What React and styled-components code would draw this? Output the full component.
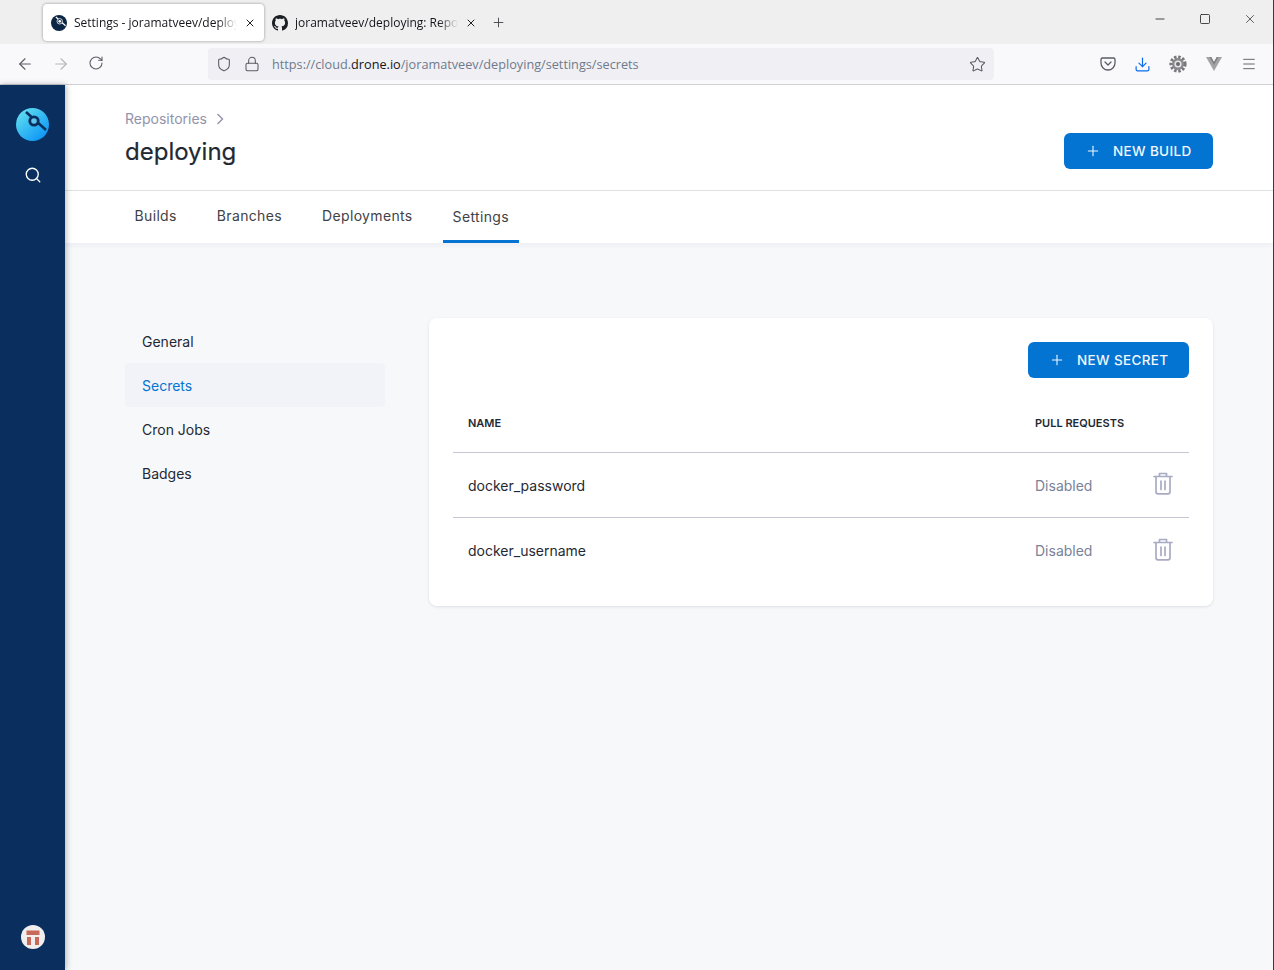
import React from "react";
import styled, { createGlobalStyle } from "styled-components";
import { ArrowLeft, ArrowRight, RotateCw, Shield, Lock, Star, Download, Menu, X, Plus, Search, Minus, Square } from "lucide-react";

const GlobalStyle = createGlobalStyle`
  html, body { margin: 0; padding: 0; background: #f7f8fa; }
  * { box-sizing: border-box; }
  body { font-family: Inter, "Liberation Sans", sans-serif; }
`;

const Window = styled.div`
  width: 1274px;
  height: 970px;
  display: flex;
  flex-direction: column;
  overflow: hidden;
  border-right: 1px solid #3a3a3a;
`;

const TabBar = styled.div`
  height: 44px;
  flex: none;
  background: #efeff0;
  display: flex;
  align-items: flex-start;
  padding: 4px 0 0 43px;
`;

const Tab = styled.div`
  width: ${(p) => p.$width}px;
  height: 37px;
  flex: none;
  display: flex;
  align-items: center;
  padding: 0 8px;
  gap: 7px;
  border-radius: 4px;
  background: ${(p) => (p.$active ? "#fff" : "transparent")};
  box-shadow: ${(p) => (p.$active ? "0 0 3px rgba(0,0,0,0.4)" : "none")};
  color: #15141a;
  font-family: "Open Sans", sans-serif;
  font-size: 12px;
`;

const TabTitle = styled.span`
  flex: 1;
  overflow: hidden;
  white-space: nowrap;
  -webkit-mask-image: linear-gradient(90deg, #000 88%, transparent);
  mask-image: linear-gradient(90deg, #000 88%, transparent);
`;

const NewTab = styled.div`
  margin: 11px 0 0 6px;
  color: #3d3d42;
  display: flex;
`;

const WindowButtons = styled.div`
  margin-left: auto;
  display: flex;
  align-items: center;
  gap: 32px;
  padding: 8px 16px 0 0;
  color: #111;
`;

const ToolBar = styled.div`
  height: 41px;
  flex: none;
  background: #f9f9fb;
  border-bottom: 1px solid #cfcfd4;
  display: flex;
  align-items: center;
  padding: 0 16px 0 16px;
  color: #5b5b66;
`;

const NavButtons = styled.div`
  display: flex;
  gap: 18px;
  width: 192px;
  flex: none;
`;

const UrlBar = styled.div`
  width: 786px;
  height: 32px;
  flex: none;
  background: #f0f0f4;
  border-radius: 4px;
  display: flex;
  align-items: center;
  padding: 0 8px;
  gap: 12px;
`;

const Url = styled.div`
  flex: 1;
  font-family: "Open Sans", sans-serif;
  font-size: 12.7px;
  color: #6f7a8c;
  white-space: nowrap;
  b { font-weight: 400; color: #15141a; }
`;

const ToolIcons = styled.div`
  margin-left: auto;
  display: flex;
  align-items: center;
  gap: 18px;
`;

const Page = styled.div`
  flex: 1;
  display: flex;
  min-height: 0;
`;

const Sidebar = styled.aside`
  width: 65px;
  flex: none;
  background: #0a2f5f;
  box-shadow: 1px 0 6px rgba(0, 0, 0, 0.3);
  z-index: 1;
  display: flex;
  flex-direction: column;
  align-items: center;
  padding: 23px 0 21px;
  color: #fff;
`;

const SearchButton = styled.div`
  margin-top: 25px;
  display: flex;
`;

const Avatar = styled.div`
  margin-top: auto;
  display: flex;
`;

const Content = styled.main`
  flex: 1;
  min-width: 0;
  display: flex;
  flex-direction: column;
  background: #f7f8fa;
`;

const Header = styled.header`
  height: 106px;
  flex: none;
  background: #fff;
  border-bottom: 1px solid #e3e4e8;
  display: flex;
  align-items: flex-start;
  justify-content: space-between;
  padding: 25px 60px 0 60px;
`;

const Crumb = styled.div`
  display: flex;
  align-items: center;
  gap: 9px;
  font-size: 14px;
  line-height: 18px;
  color: #9293ab;
`;

const Title = styled.h1`
  margin: 8px 0 0;
  font-size: 24px;
  line-height: 32px;
  font-weight: 400;
  color: #1f2933;
  -webkit-text-stroke: 0.2px #1f2933;
`;

const PrimaryButton = styled.button`
  height: 36px;
  width: ${(p) => p.$width}px;
  border: 0;
  border-radius: 6px;
  background: #0474d2;
  color: #f2f8fd;
  font-family: inherit;
  font-size: 13.5px;
  font-weight: 500;
  letter-spacing: 0.35px;
  display: flex;
  align-items: center;
  padding: 0 0 0 21px;
  gap: 12px;
  margin-top: ${(p) => p.$top || 0}px;
`;

const TabNav = styled.nav`
  height: 52px;
  flex: none;
  background: #fff;
  box-shadow: 0 2px 6px rgba(30, 40, 70, 0.05);
  display: flex;
  padding-left: 60px;
`;

const NavItem = styled.div`
  padding: 0 9.5px;
  margin-right: 21px;
  display: flex;
  align-items: center;
  height: 100%;
  padding-bottom: 1px;
  font-size: 14px;
  letter-spacing: 0.35px;
  color: #3f4247;
  border-bottom: 3px solid ${(p) => (p.$active ? "#0474d2" : "transparent")};
  border-radius: 0 0 0 0;
  ${(p) => p.$active && "border-top: 3px solid transparent;"}
`;

const Body = styled.div`
  display: flex;
  align-items: flex-start;
  padding: 76px 60px 0;
  gap: 44px;
`;

const SideMenu = styled.ul`
  list-style: none;
  margin: 0;
  padding: 0;
  width: 260px;
  flex: none;
`;

const SideItem = styled.li`
  height: 44px;
  display: flex;
  align-items: center;
  padding-left: 17px;
  border-radius: 4px;
  font-size: 14px;
  color: ${(p) => (p.$active ? "#0474d2" : "#1f2933")};
  background: ${(p) => (p.$active ? "#f2f3f9" : "transparent")};
`;

const Card = styled.section`
  width: 784px;
  height: 288px;
  flex: none;
  background: #fff;
  border-radius: 8px;
  box-shadow: 0 1px 3px rgba(40, 50, 80, 0.12);
  padding: 24px 24px 0;
  display: flex;
  flex-direction: column;
  margin-top: -1px;
`;

const CardActions = styled.div`
  display: flex;
  justify-content: flex-end;
`;

const TableRow = styled.div`
  display: grid;
  grid-template-columns: 567px 118px 1fr;
  align-items: center;
  padding-left: 15px;
  height: ${(p) => p.$height}px;
  border-bottom: ${(p) => (p.$line ? "1px solid #c6c6d4" : "0")};
`;

const HeadCell = styled.div`
  font-size: 11px;
  font-weight: 600;
  color: #1f2933;
`;

const NameCell = styled.div`
  font-size: 14px;
  color: #1f2933;
`;

const StateCell = styled.div`
  font-size: 14px;
  color: #78829a;
`;

const DeleteIcon = styled.div`
  display: flex;
  margin-top: -3px;
  color: #a9abc3;
`;

const TableHead = styled(TableRow)`
  margin-top: 16px;
`;

const DroneLogo = ({ size = 33, dark = false }) => (
  <svg width={size} height={size} viewBox="0 0 33 33">
    <defs>
      <linearGradient id={dark ? "dl" : "ll"} x1="0.15" y1="0.1" x2="0.85" y2="0.9">
        <stop offset="0" stopColor={dark ? "#0b2545" : "#5ddcf0"} />
        <stop offset="1" stopColor={dark ? "#0b2545" : "#0d96f6"} />
      </linearGradient>
    </defs>
    <circle cx="16.5" cy="16.5" r="16.5" fill={`url(#${dark ? "dl" : "ll"})`} />
    <path d="M10 4 L30 22" stroke={dark ? "#fff" : "#0a2f5f"} strokeWidth="2.6" />
    <circle cx="18" cy="13" r="5.6" fill={dark ? "#0b2545" : "#0a2f5f"} stroke={dark ? "#fff" : "none"} strokeWidth="1.6" />
    <circle cx="18" cy="13" r="2.8" fill={dark ? "#fff" : "#5fc4ee"} />
  </svg>
);

const GithubMark = () => (
  <svg width="16" height="16" viewBox="0 0 16 16" fill="#1b1f23">
    <path d="M8 0C3.58 0 0 3.58 0 8c0 3.54 2.29 6.53 5.47 7.59.4.07.55-.17.55-.38 0-.19-.01-.82-.01-1.49-2.01.37-2.53-.49-2.69-.94-.09-.23-.48-.94-.82-1.13-.28-.15-.68-.52-.01-.53.63-.01 1.08.58 1.23.82.72 1.21 1.87.87 2.33.66.07-.52.28-.87.51-1.07-1.78-.2-3.64-.89-3.64-3.95 0-.87.31-1.59.82-2.15-.08-.2-.36-1.02.08-2.12 0 0 .67-.21 2.2.82.64-.18 1.32-.27 2-.27s1.36.09 2 .27c1.53-1.04 2.2-.82 2.2-.82.44 1.1.16 1.92.08 2.12.51.56.82 1.27.82 2.15 0 3.07-1.87 3.75-3.65 3.95.29.25.54.73.54 1.48 0 1.07-.01 1.93-.01 2.2 0 .21.15.46.55.38A8 8 0 0 0 16 8c0-4.42-3.58-8-8-8z" />
  </svg>
);

const Pocket = () => (
  <svg width="16" height="16" viewBox="0 0 16 16" fill="none" stroke="#5b5b66" strokeWidth="1.3">
    <path d="M2.5 2h11A1.5 1.5 0 0 1 15 3.5V7a7 7 0 0 1-14 0V3.5A1.5 1.5 0 0 1 2.5 2z" />
    <path d="M5 6l3 3 3-3" strokeLinecap="round" strokeLinejoin="round" />
  </svg>
);

const Gear = () => (
  <svg width="18" height="18" viewBox="0 0 18 18">
    <circle cx="9" cy="9" r="6.8" fill="none" stroke="#77777c" strokeWidth="3.6" strokeDasharray="2.4 1.6" />
    <circle cx="9" cy="9" r="6" fill="#8a8a8e" />
    <circle cx="9" cy="9" r="3.6" fill="#e6e6e8" />
    <circle cx="9" cy="9" r="2" fill="#6a6a6e" />
  </svg>
);

const VeeIcon = () => (
  <svg width="18" height="16" viewBox="0 0 18 16">
    <path d="M1 1h5.2L9 6l2.8-5H17L9 15z" fill="#a3a3a6" />
    <path d="M6.2 1L9 6l2.8-5h1.6L9 8.8 4.6 1z" fill="#7d7d80" />
  </svg>
);

const TrashIcon = () => (
  <svg width="20" height="23" viewBox="0 0 20 23" fill="none" stroke="currentColor" strokeWidth="1.7" strokeLinejoin="round">
    <path d="M1 4.5h18" strokeLinecap="round" />
    <path d="M6.5 4.5V1.5h7v3" />
    <path d="M3 4.5v15.3a2 2 0 0 0 2 2h10a2 2 0 0 0 2-2V4.5" />
    <path d="M8 9v8.5M12 9v8.5" strokeLinecap="round" />
  </svg>
);

const AvatarIcon = () => (
  <svg width="24" height="24" viewBox="0 0 24 24">
    <circle cx="12" cy="12" r="12" fill="#f1eeee" />
    <rect x="5.5" y="5.5" width="13" height="4.5" fill="#c9695a" />
    <rect x="6" y="12" width="4" height="8" fill="#c9695a" />
    <rect x="14" y="12" width="4" height="8" fill="#c9695a" />
  </svg>
);

const navItems = ["Builds", "Branches", "Deployments", "Settings"];
const menuItems = ["General", "Secrets", "Cron Jobs", "Badges"];
const secrets = ["docker_password", "docker_username"];

export default function App() {
  return (
    <Window>
      <GlobalStyle />
      <TabBar>
        <Tab $active $width={221}>
          <DroneLogo size={16} dark />
          <TabTitle>Settings - joramatveev/deploying:</TabTitle>
          <X size={12} color="#222" />
        </Tab>
        <Tab $width={221}>
          <GithubMark />
          <TabTitle>joramatveev/deploying: Repository</TabTitle>
          <X size={12} color="#222" />
        </Tab>
        <NewTab>
          <Plus size={15} strokeWidth={1.4} />
        </NewTab>
        <WindowButtons>
          <Minus size={14} strokeWidth={1.3} />
          <Square size={12} strokeWidth={1.5} />
          <X size={14} strokeWidth={1.1} />
        </WindowButtons>
      </TabBar>
      <ToolBar>
        <NavButtons>
          <ArrowLeft size={18} strokeWidth={1.5} />
          <ArrowRight size={18} strokeWidth={1.5} color="#b5b5bb" />
          <RotateCw size={16} strokeWidth={1.6} />
        </NavButtons>
        <UrlBar>
          <Shield size={16} strokeWidth={1.6} />
          <Lock size={16} strokeWidth={1.6} />
          <Url>
            https://cloud.<b>drone.io</b>/joramatveev/deploying/settings/secrets
          </Url>
          <Star size={17} strokeWidth={1.5} />
        </UrlBar>
        <ToolIcons>
          <Pocket />
          <Download size={17} strokeWidth={1.7} color="#0a6cf0" />
          <Gear />
          <VeeIcon />
          <Menu size={16} strokeWidth={1.4} />
        </ToolIcons>
      </ToolBar>
      <Page>
        <Sidebar>
          <DroneLogo />
          <SearchButton>
            <Search size={18} strokeWidth={1.8} />
          </SearchButton>
          <Avatar>
            <AvatarIcon />
          </Avatar>
        </Sidebar>
        <Content>
          <Header>
            <div>
              <Crumb>
                Repositories
                <svg width="8" height="12" viewBox="0 0 8 12" fill="none" stroke="#9293ab" strokeWidth="1.4">
                  <path d="M1.5 1l5 5-5 5" />
                </svg>
              </Crumb>
              <Title>deploying</Title>
            </div>
            <PrimaryButton $width={149} $top={23}>
              <Plus size={16} strokeWidth={1.6} />
              NEW BUILD
            </PrimaryButton>
          </Header>
          <TabNav>
            {navItems.map((item) => (
              <NavItem key={item} $active={item === "Settings"}>
                {item}
              </NavItem>
            ))}
          </TabNav>
          <Body>
            <SideMenu>
              {menuItems.map((item) => (
                <SideItem key={item} $active={item === "Secrets"}>
                  {item}
                </SideItem>
              ))}
            </SideMenu>
            <Card>
              <CardActions>
                <PrimaryButton $width={161}>
                  <Plus size={16} strokeWidth={1.6} />
                  NEW SECRET
                </PrimaryButton>
              </CardActions>
              <TableHead $height={59} $line>
                <HeadCell>NAME</HeadCell>
                <HeadCell>PULL REQUESTS</HeadCell>
              </TableHead>
              {secrets.map((name, i) => (
                <TableRow key={name} $height={65} $line={i === 0}>
                  <NameCell>{name}</NameCell>
                  <StateCell>Disabled</StateCell>
                  <DeleteIcon>
                    <TrashIcon />
                  </DeleteIcon>
                </TableRow>
              ))}
            </Card>
          </Body>
        </Content>
      </Page>
    </Window>
  );
}
